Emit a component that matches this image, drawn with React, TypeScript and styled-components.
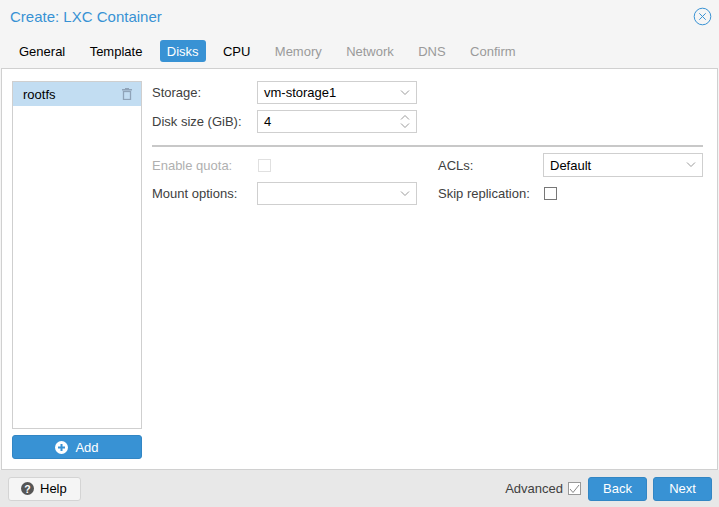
import React from "react";
import styled, { createGlobalStyle } from "styled-components";

const GlobalStyle = createGlobalStyle`
  html, body {
    margin: 0;
    padding: 0;
    background: #f5f5f5;
  }
  body {
    font-family: "Liberation Sans", Arial, sans-serif;
    font-size: 13px;
    color: #000;
  }
`;

const tabs = [
  { label: "General", enabled: true },
  { label: "Template", enabled: true },
  { label: "Disks", enabled: true, active: true },
  { label: "CPU", enabled: true },
  { label: "Memory", enabled: false },
  { label: "Network", enabled: false },
  { label: "DNS", enabled: false },
  { label: "Confirm", enabled: false },
];

const Chevron = ({ up }: { up?: boolean }) => (
  <svg width="10" height="6" viewBox="0 0 10 6">
    <path
      d={up ? "M1 5.5 L5 1.5 L9 5.5" : "M1 0.5 L5 4.5 L9 0.5"}
      fill="none"
      stroke="#9a9a9a"
      strokeWidth="1"
    />
  </svg>
);

const App = () => {
  return (
    <>
      <GlobalStyle />
      <Dialog>
        <Header>
          <Title>Create: LXC Container</Title>
          <CloseIcon width="19" height="19" viewBox="0 0 19 19">
            <circle cx="9.5" cy="9.5" r="8.3" fill="none" stroke="#3892d4" strokeWidth="1" />
            <path d="M6.3 6.3 L12.7 12.7 M12.7 6.3 L6.3 12.7" stroke="#3892d4" strokeWidth="1" />
          </CloseIcon>
        </Header>

        <TabBar>
          {tabs.map((t) => (
            <Tab key={t.label} $active={t.active} $enabled={t.enabled}>
              {t.label}
            </Tab>
          ))}
        </TabBar>

        <Body>
          <LeftColumn>
            <DiskList>
              <DiskRow $selected>
                <span>rootfs</span>
                <svg width="10" height="12" viewBox="0 0 10 12">
                  <rect x="0" y="1" width="10" height="1.5" fill="#8fa3b8" />
                  <rect x="3" y="0" width="4" height="1.5" fill="#8fa3b8" />
                  <rect x="1.5" y="3.5" width="7" height="8" fill="none" stroke="#8fa3b8" strokeWidth="1.3" />
                </svg>
              </DiskRow>
            </DiskList>
            <AddButton>
              <svg width="13" height="13" viewBox="0 0 13 13">
                <circle cx="6.5" cy="6.5" r="6.5" fill="#fff" />
                <path d="M6.5 3 V10 M3 6.5 H10" stroke="#3892d4" strokeWidth="2" />
              </svg>
              Add
            </AddButton>
          </LeftColumn>

          <Form>
            <FieldRow>
              <Label>Storage:</Label>
              <Field>
                <FieldText>vm-storage1</FieldText>
                <Chevron />
              </Field>
            </FieldRow>
            <FieldRow>
              <Label>Disk size (GiB):</Label>
              <Field>
                <FieldText>4</FieldText>
                <Spinner>
                  <Chevron up />
                  <Chevron />
                </Spinner>
              </Field>
            </FieldRow>

            <Separator />

            <Columns>
              <Column>
                <FieldRow $tall>
                  <Label $disabled>Enable quota:</Label>
                  <CheckBox $disabled />
                </FieldRow>
                <FieldRow>
                  <Label>Mount options:</Label>
                  <Field>
                    <FieldText />
                    <Chevron />
                  </Field>
                </FieldRow>
              </Column>
              <Column>
                <FieldRow $tall>
                  <Label>ACLs:</Label>
                  <Field $tall>
                    <FieldText>Default</FieldText>
                    <Chevron />
                  </Field>
                </FieldRow>
                <FieldRow>
                  <Label>Skip replication:</Label>
                  <CheckBox />
                </FieldRow>
              </Column>
            </Columns>
          </Form>
        </Body>

        <Footer>
          <FooterButton>
            <svg width="13" height="13" viewBox="0 0 13 13">
              <circle cx="6.5" cy="6.5" r="6.5" fill="#555" />
              <text x="6.5" y="10.5" textAnchor="middle" fill="#fff" fontSize="10.5" fontWeight="bold" fontFamily="Liberation Sans, Arial, sans-serif">?</text>
            </svg>
            Help
          </FooterButton>
          <Spacer />
          <AdvancedToggle>
            <AdvancedLabel>Advanced</AdvancedLabel>
            <CheckBox $checked>
              <svg width="11" height="10" viewBox="0 0 11 10">
                <path d="M1 5 L4 8.5 L10 1" fill="none" stroke="#888" strokeWidth="1" />
              </svg>
            </CheckBox>
          </AdvancedToggle>
          <PrimaryButton>Back</PrimaryButton>
          <PrimaryButton>Next</PrimaryButton>
        </Footer>
      </Dialog>
    </>
  );
};

const Dialog = styled.div`
  width: 719px;
  height: 507px;
  display: flex;
  flex-direction: column;
  background: #f5f5f5;
  box-sizing: border-box;
`;

const Header = styled.div`
  height: 32px;
  display: flex;
  align-items: center;
  justify-content: space-between;
  padding: 1px 7px 0 10px;
  box-sizing: border-box;
`;

const Title = styled.div`
  color: #3892d4;
  font-size: 15px;
`;

const CloseIcon = styled.svg`
  display: block;
`;

const TabBar = styled.div`
  height: 36px;
  display: flex;
  align-items: flex-start;
  gap: 10.4px;
  padding: 8px 0 0 12px;
  box-sizing: border-box;
`;

const Tab = styled.div<{ $active?: boolean; $enabled?: boolean }>`
  height: 22px;
  line-height: 23px;
  padding: 0 7px;
  border-radius: 3px;
  background: ${(p) => (p.$active ? "#3892d4" : "transparent")};
  color: ${(p) => (p.$active ? "#fff" : p.$enabled ? "#000" : "#9a9a9a")};
`;

const Body = styled.div`
  flex: 1;
  display: flex;
  gap: 10px;
  margin: 0 1px;
  padding: 12px 14px 10px 10px;
  background: #fff;
  border: 1px solid #d0d0d0;
  min-height: 0;
`;

const LeftColumn = styled.div`
  width: 130px;
  flex-shrink: 0;
  display: flex;
  flex-direction: column;
  gap: 6px;
`;

const DiskList = styled.div`
  flex: 1;
  border: 1px solid #cfcfcf;
`;

const DiskRow = styled.div<{ $selected?: boolean }>`
  height: 24px;
  display: flex;
  align-items: center;
  justify-content: space-between;
  padding: 0 9px 0 10px;
  background: ${(p) => (p.$selected ? "#c2ddf2" : "transparent")};
`;

const AddButton = styled.div`
  height: 24px;
  border-radius: 3px;
  background: #3892d4;
  border: 1px solid #3286c4;
  color: #fff;
  display: flex;
  align-items: center;
  justify-content: center;
  gap: 7px;
  box-sizing: border-box;
`;

const Form = styled.div`
  flex: 1;
  display: flex;
  flex-direction: column;
`;

const FieldRow = styled.div<{ $tall?: boolean }>`
  display: flex;
  align-items: center;
  height: ${(p) => (p.$tall ? "24px" : "23px")};
  margin-bottom: ${(p) => (p.$tall ? "5px" : "6px")};
`;

const Label = styled.div<{ $disabled?: boolean }>`
  width: 105px;
  flex-shrink: 0;
  color: ${(p) => (p.$disabled ? "#b0b0b0" : "#404040")};
`;

const Field = styled.div<{ $tall?: boolean }>`
  width: 160px;
  flex-shrink: 0;
  height: ${(p) => (p.$tall ? "24px" : "23px")};
  border: 1px solid #cfcfcf;
  box-sizing: border-box;
  display: flex;
  align-items: center;
  padding: 0 6px 0 6px;
`;

const FieldText = styled.div`
  flex: 1;
  color: #000;
`;

const Spinner = styled.div`
  display: flex;
  flex-direction: column;
  gap: 3px;
`;

const Separator = styled.div`
  height: 0;
  border-top: 2px solid #c8c8c8;
  margin: 6px 0 6px 0;
`;

const Columns = styled.div`
  display: flex;
  gap: 21px;
`;

const Column = styled.div`
  flex: 1;
  display: flex;
  flex-direction: column;
`;

const CheckBox = styled.div<{ $disabled?: boolean; $checked?: boolean }>`
  width: 13px;
  height: 13px;
  margin-left: 1px;
  border: 1px solid ${(p) => (p.$disabled ? "#e0e0e0" : p.$checked ? "#999" : "#777")};
  box-sizing: border-box;
  background: #fff;
  display: flex;
  align-items: center;
  justify-content: center;
`;

const Footer = styled.div`
  height: 37px;
  display: flex;
  align-items: center;
  gap: 6px;
  padding: 0 7px 0 8px;
  background: #e8e8e8;
  box-sizing: border-box;
`;

const Spacer = styled.div`
  flex: 1;
`;

const FooterButton = styled.div`
  width: 73px;
  height: 24px;
  border: 1px solid #d4d4d4;
  border-radius: 3px;
  background: #f5f5f5;
  box-sizing: border-box;
  display: flex;
  align-items: center;
  gap: 6px;
  padding-left: 12px;
`;

const AdvancedToggle = styled.div`
  display: flex;
  align-items: center;
  gap: 4px;
  margin-right: 1px;
`;

const AdvancedLabel = styled.div`
  color: #404040;
`;

const PrimaryButton = styled.div`
  width: 59px;
  height: 24px;
  border-radius: 3px;
  background: #3892d4;
  border: 1px solid #3286c4;
  box-sizing: border-box;
  color: #fff;
  display: flex;
  align-items: center;
  justify-content: center;
`;

export default App;
